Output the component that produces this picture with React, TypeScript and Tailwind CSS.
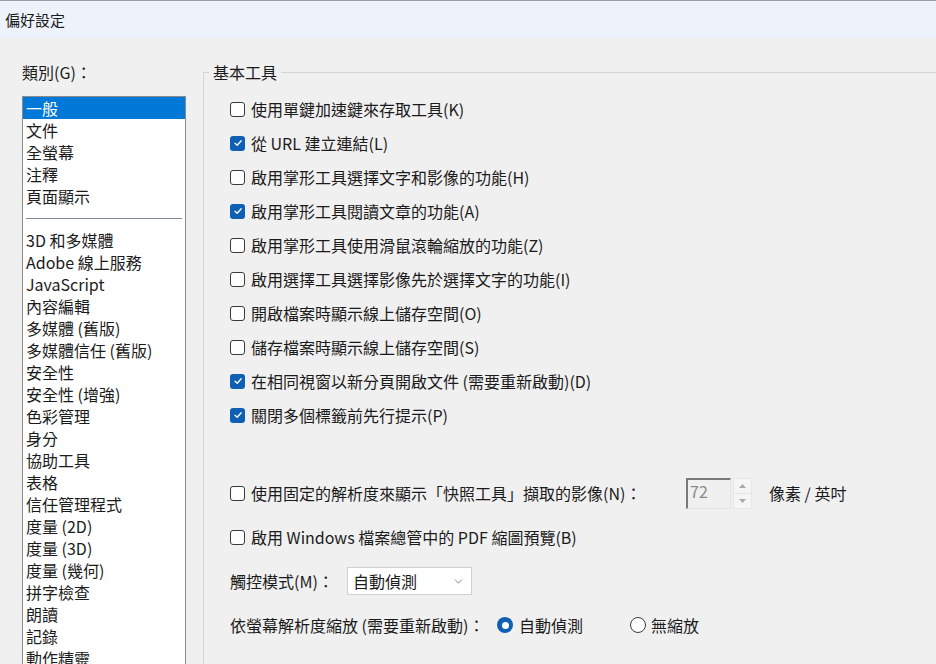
import React from 'react';
import { ChevronDown } from 'lucide-react';

const categoriesTop = ['一般', '文件', '全螢幕', '注釋', '頁面顯示'];
const categoriesBottom = [
  '3D 和多媒體',
  'Adobe 線上服務',
  'JavaScript',
  '內容編輯',
  '多媒體 (舊版)',
  '多媒體信任 (舊版)',
  '安全性',
  '安全性 (增強)',
  '色彩管理',
  '身分',
  '協助工具',
  '表格',
  '信任管理程式',
  '度量 (2D)',
  '度量 (3D)',
  '度量 (幾何)',
  '拼字檢查',
  '朗讀',
  '記錄',
  '動作精靈',
];

const basicTools = [
  { label: '使用單鍵加速鍵來存取工具(K)', checked: false },
  { label: '從 URL 建立連結(L)', checked: true },
  { label: '啟用掌形工具選擇文字和影像的功能(H)', checked: false },
  { label: '啟用掌形工具閱讀文章的功能(A)', checked: true },
  { label: '啟用掌形工具使用滑鼠滾輪縮放的功能(Z)', checked: false },
  { label: '啟用選擇工具選擇影像先於選擇文字的功能(I)', checked: false },
  { label: '開啟檔案時顯示線上儲存空間(O)', checked: false },
  { label: '儲存檔案時顯示線上儲存空間(S)', checked: false },
  { label: '在相同視窗以新分頁開啟文件 (需要重新啟動)(D)', checked: true },
  { label: '關閉多個標籤前先行提示(P)', checked: true },
];

const CheckBox = ({ checked }: { checked: boolean }) =>
  checked ? (
    <span className="flex h-[15px] w-[15px] shrink-0 items-center justify-center rounded-[3px] bg-[#0f5fb5]">
      <svg width="10" height="10" viewBox="0 0 10 10">
        <path d="M2 5.2 L4.2 7.3 L8.2 2.8" fill="none" stroke="#fff" strokeWidth="1.3" strokeLinecap="round" strokeLinejoin="round" />
      </svg>
    </span>
  ) : (
    <span className="h-[15px] w-[15px] shrink-0 rounded-[3px] border border-[#3a3a3a] bg-white" />
  );

const Radio = ({ checked }: { checked: boolean }) =>
  checked ? (
    <span className="flex h-[16px] w-[16px] shrink-0 items-center justify-center rounded-full bg-[#0f5fb5]">
      <span className="h-[7px] w-[7px] rounded-full bg-white" />
    </span>
  ) : (
    <span className="h-[16px] w-[16px] shrink-0 rounded-full border border-[#3a3a3a] bg-white" />
  );

const CheckRow = ({ label, checked }: { label: string; checked: boolean }) => (
  <div className="flex h-[34px] items-center gap-[6px]">
    <CheckBox checked={checked} />
    <span>{label}</span>
  </div>
);

export default function App() {
  return (
    <div className="h-[664px] w-[936px] overflow-hidden bg-[#f0f0f0] text-[16px] leading-[22px] text-[#1b1b1b] [font-family:'Noto_Sans_CJK_TC',sans-serif]">
      {/* title bar */}
      <div className="flex h-[38px] items-center border-t border-[#9a9ea4] bg-[#eef2fa] px-[5px] text-[15px]">
        偏好設定
      </div>

      <div className="flex pl-[22px] pt-[23px]">
        {/* category list */}
        <div className="w-[164px] shrink-0">
          <div className="h-[22px]">類別(G)：</div>
          <div className="mt-[13px] h-[600px] border border-[#8a8a8a] bg-white">
            {categoriesTop.map((c, i) => (
              <div
                key={c}
                className={`h-[22px] whitespace-nowrap pl-[3px] ${i === 0 ? 'bg-[#0078d7] text-white' : ''}`}
              >
                {c}
              </div>
            ))}
            <div className="flex h-[22px] items-center px-[3px]">
              <div className="h-px w-full bg-[#7a8a99]" />
            </div>
            {categoriesBottom.map((c) => (
              <div key={c} className="h-[22px] whitespace-nowrap pl-[3px]">
                {c}
              </div>
            ))}
          </div>
        </div>

        {/* basic tools group */}
        <fieldset className="ml-[17px] min-w-0 flex-1 border-l border-t border-[#d4d4d4] pb-10">
          <legend className="ml-[5px] px-[4px]">基本工具</legend>
          <div className="pl-[26px] pt-[9px]">
            {basicTools.map((t) => (
              <CheckRow key={t.label} label={t.label} checked={t.checked} />
            ))}

            <div className="mt-[44px] flex h-[34px] items-center">
              <CheckBox checked={false} />
              <span className="ml-[6px] w-[435px] whitespace-nowrap">
                使用固定的解析度來顯示「快照工具」擷取的影像(N)：
              </span>
              <div className="flex h-[31px] w-[45px] items-start border-l-2 border-t-2 border-b border-r border-l-[#7a7a7a] border-t-[#7a7a7a] border-b-[#e3e3e3] border-r-[#e3e3e3] bg-[#f0f0f0] pl-[2px] text-[#8a8a8a]">
                72
              </div>
              <div className="ml-[2px] flex h-[31px] w-[19px] flex-col">
                <div className="flex flex-1 items-center justify-center border border-[#e6e6e6] bg-[#f5f5f5]">
                  <svg width="7" height="4" viewBox="0 0 7 4">
                    <path d="M0 4 L3.5 0 L7 4 Z" fill="#a8a8a8" />
                  </svg>
                </div>
                <div className="flex flex-1 items-center justify-center border border-t-0 border-[#e6e6e6] bg-[#f5f5f5]">
                  <svg width="7" height="4" viewBox="0 0 7 4">
                    <path d="M0 0 L7 0 L3.5 4 Z" fill="#a8a8a8" />
                  </svg>
                </div>
              </div>
              <span className="ml-[17px]">像素 / 英吋</span>
            </div>

            <div className="mt-[10px]">
              <CheckRow label="啟用 Windows 檔案總管中的 PDF 縮圖預覽(B)" checked={false} />
            </div>

            <div className="mt-[10px] flex h-[34px] items-center">
              <span className="w-[117px]">觸控模式(M)：</span>
              <div className="flex h-[28px] w-[125px] items-center justify-between border border-[#d0d0d0] bg-white pl-[5px] pr-[6px]">
                <span>自動偵測</span>
                <ChevronDown size={13} strokeWidth={1.5} color="#6a6a6a" />
              </div>
            </div>

            <div className="mt-[10px] flex h-[34px] items-center">
              <span className="w-[267px] whitespace-nowrap">依螢幕解析度縮放 (需要重新啟動)：</span>
              <div className="flex w-[133px] items-center gap-[6px]">
                <Radio checked />
                <span>自動偵測</span>
              </div>
              <div className="flex items-center gap-[5px]">
                <Radio checked={false} />
                <span>無縮放</span>
              </div>
            </div>
          </div>
        </fieldset>
      </div>
    </div>
  );
}
